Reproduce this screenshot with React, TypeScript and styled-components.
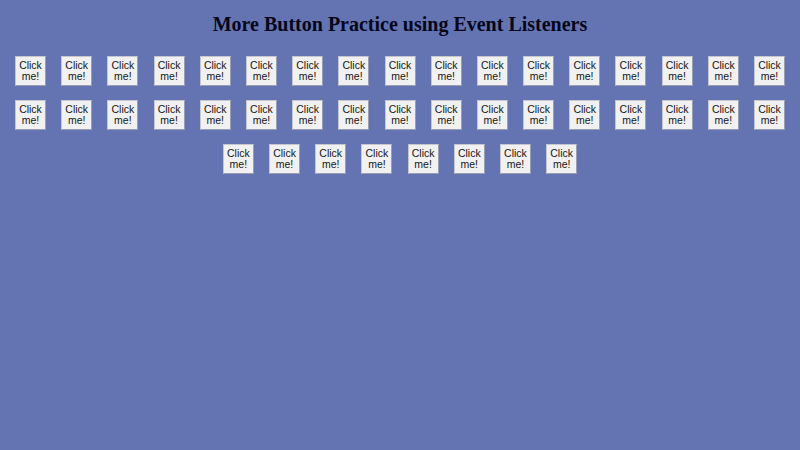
import React, { useEffect, useRef } from "react";
import styled, { createGlobalStyle } from "styled-components";

const GlobalStyle = createGlobalStyle`
  html, body {
    margin: 0;
    padding: 0;
    background: #6474b3;
  }
`;

const Page = styled.div`
  min-height: 450px;
  padding: 12px 8px 0;
  box-sizing: border-box;
`;

const Title = styled.h1`
  margin: 0 0 20px;
  font-family: "Liberation Serif", "Times New Roman", serif;
  font-size: 20px;
  font-weight: bold;
  line-height: 24px;
  text-align: center;
  color: #06061a;
`;

const Buttons = styled.div`
  display: flex;
  flex-wrap: wrap;
  justify-content: center;
  column-gap: 15.2px;
  row-gap: 14px;
`;

const ClickButton = styled.button<{ $clicked?: boolean }>`
  width: 31px;
  height: 30px;
  padding: 0;
  box-sizing: border-box;
  border: 1px solid #c4c6d0;
  border-right-color: #9a9eb0;
  border-bottom-color: #9a9eb0;
  background: ${(props) => (props.$clicked ? "#d9dcf0" : "#f1f1f1")};
  font-family: "Liberation Sans", Arial, sans-serif;
  font-size: 10.5px;
  line-height: 11px;
  color: #151515;
  cursor: pointer;
`;

const BUTTON_COUNT = 42;

const App = () => {
  const container = useRef<HTMLDivElement>(null);

  // each button gets its own click listener instead of a React onClick
  useEffect(() => {
    const buttons = Array.from(container.current?.querySelectorAll("button") ?? []);
    const handler = (e: Event) => {
      const target = e.currentTarget as HTMLButtonElement;
      console.log(`Button ${target.dataset.index} clicked`);
    };
    buttons.forEach((b) => b.addEventListener("click", handler));
    return () => buttons.forEach((b) => b.removeEventListener("click", handler));
  }, []);

  return (
    <Page>
      <GlobalStyle />
      <Title>More Button Practice using Event Listeners</Title>
      <Buttons ref={container}>
        {Array.from({ length: BUTTON_COUNT }, (_, i) => (
          <ClickButton key={i} data-index={i}>
            Click
            <br />
            me!
          </ClickButton>
        ))}
      </Buttons>
    </Page>
  );
};

export default App;
